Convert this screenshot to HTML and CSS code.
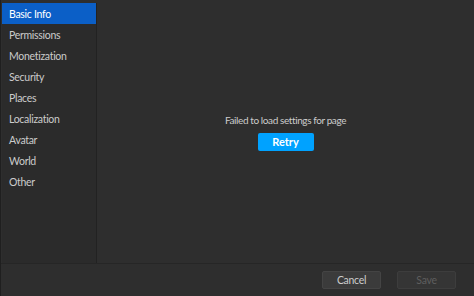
FILE: index.html
```html
<!DOCTYPE html>
<html lang="en">
<head>
    <meta charset="UTF-8">
    <title>Game Settings</title>
    <link rel="stylesheet" href="styles.css">
</head>
<body>
    <div class="dialog">
        <div class="content">
            <ul class="menu">
                <li class="selected">Basic Info</li>
                <li>Permissions</li>
                <li>Monetization</li>
                <li>Security</li>
                <li>Places</li>
                <li>Localization</li>
                <li>Avatar</li>
                <li>World</li>
                <li>Other</li>
            </ul>
            <div class="main">
                <p class="error">Failed to load settings for page</p>
                <button class="retry">Retry</button>
            </div>
        </div>
        <div class="footer">
            <button class="btn">Cancel</button>
            <button class="btn disabled">Save</button>
        </div>
    </div>
</body>
</html>
```

FILE: styles.css
```css
body {
    margin: 0;
    background-color: #2e2e2e;
    font-family: Lato, sans-serif;
    font-size: 10.5px;
    letter-spacing: -0.3px;
    color: #cccccc;
}
.dialog {
    display: flex;
    flex-direction: column;
    height: 296px;
    border-left: 1px solid #1f1f1f;
    box-sizing: border-box;
}
.content {
    display: flex;
    flex: 1;
    padding: 3px 0 0 1px;
}
.menu {
    list-style: none;
    margin: 0;
    padding: 0;
    width: 94px;
    background-color: #2b2b2b;
    border-right: 1px solid #222222;
}
.menu li {
    height: 20px;
    padding-top: 1px;
    line-height: 21px;
    padding-left: 7px;
}
.menu li.selected {
    background-color: #0b5fc7;
    color: #ffffff;
}
.main {
    flex: 1;
    display: flex;
    flex-direction: column;
    align-items: center;
    justify-content: center;
    padding-bottom: 2px;
}
.error {
    margin: 0 0 7px 0;
    font-size: 10px;
    letter-spacing: -0.4px;
}
.retry {
    width: 56px;
    height: 18px;
    border: none;
    border-radius: 2px;
    background-color: #00a2ff;
    color: #ffffff;
    font-family: inherit;
    font-size: 11px;
    font-weight: bold;
    letter-spacing: 0;
    padding: 0;
}
.footer {
    display: flex;
    justify-content: flex-end;
    align-items: center;
    gap: 16px;
    height: 32px;
    padding-right: 18px;
    border-top: 1px solid #262626;
}
.btn {
    width: 59px;
    height: 18px;
    padding: 0;
    border: 1px solid #444444;
    border-radius: 2px;
    background-color: #3b3b3b;
    color: #cccccc;
    font-family: inherit;
    font-size: 10.5px;
    letter-spacing: -0.3px;
}
.btn.disabled {
    color: #5e5e5e;
    background-color: #353535;
    border-color: #3d3d3d;
}
```
